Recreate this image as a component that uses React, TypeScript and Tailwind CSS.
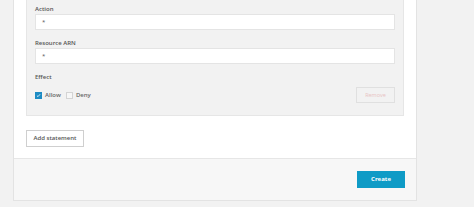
export default function App() {
  return (
    <div
      className="flex h-[207px] w-[474px] overflow-hidden bg-[#f2f2f2] pl-[13px] text-[#444]"
      style={{ fontFamily: '"Open Sans", "Liberation Sans", sans-serif' }}
    >
      <div className="flex h-[201px] w-[404px] flex-col border-x border-b border-[#e3e3e3] bg-white">
        <div className="flex flex-1 flex-col px-[12px]">
          {/* Statement panel */}
          <div className="flex flex-col border-x border-b border-[#e6e6e6] bg-[#f2f2f2] px-[8px] pb-[12px] pt-[5px]">
            <label className="text-[6px] font-semibold leading-[8px] text-[#555]">Action</label>
            <div className="mt-[1px] flex h-[16px] items-center border border-[#e4e4e4] bg-white px-[6px] text-[6px] text-[#555]">
              *
            </div>
            <label className="mt-[9px] text-[6px] font-semibold leading-[8px] text-[#555]">Resource ARN</label>
            <div className="mt-[1px] flex h-[16px] items-center border border-[#e4e4e4] bg-white px-[6px] text-[6px] text-[#555]">
              *
            </div>
            <label className="mt-[9px] text-[6px] font-semibold leading-[8px] text-[#555]">Effect</label>
            <div className="mt-[6px] flex items-center justify-between">
              <div className="flex items-center text-[6px] font-semibold text-[#666]">
                <span className="flex h-[7px] w-[7px] items-center justify-center bg-[#1e8bc3]">
                  <svg viewBox="0 0 8 8" className="h-[5px] w-[5px]">
                    <path d="M1.5 4.2 L3.2 5.8 L6.5 2" fill="none" stroke="white" strokeWidth="1.3" />
                  </svg>
                </span>
                <span className="ml-[3px]">Allow</span>
                <span className="ml-[5px] h-[7px] w-[7px] border border-[#d4d4d4] bg-[#f7f7f7]" />
                <span className="ml-[3px]">Deny</span>
              </div>
              <button className="flex h-[16px] w-[39px] items-center justify-center border border-[#e0e0e0] bg-[#f2f2f2] text-[5.5px] text-[#e8c2c2]">
                Remove
              </button>
            </div>
          </div>
          <div className="mt-[14px]">
            <button className="flex h-[17px] w-[58px] items-center justify-center border border-[#cfcfcf] bg-white text-[6px] font-semibold text-[#555]">
              Add statement
            </button>
          </div>
        </div>
        <div className="flex h-[42px] items-center justify-end border-t border-[#e6e6e6] bg-[#f7f7f7] pr-[11px]">
          <button className="flex h-[17px] w-[48px] items-center justify-center bg-[#0f9bc6] text-[6px] font-bold text-white">
            Create
          </button>
        </div>
      </div>
    </div>
  )
}
